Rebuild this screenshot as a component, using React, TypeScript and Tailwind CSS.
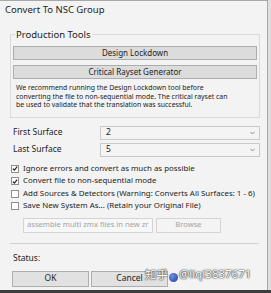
import React from "react";

const FONT = { fontFamily: "'Noto Sans', 'Open Sans', sans-serif" };

function Check({ on }: { on: boolean }) {
  return (
    <span className="w-[8px] h-[8px] border border-[#8f8f8f] bg-white flex items-center justify-center shrink-0">
      {on && (
        <svg width="7" height="7" viewBox="0 0 7 7">
          <path d="M1 3.6 L2.8 5.4 L6 1.2" fill="none" stroke="#222" strokeWidth="1.4" />
        </svg>
      )}
    </span>
  );
}

function Select({ value }: { value: string }) {
  return (
    <div className="w-[160px] h-[14px] border border-[#c9c9c9] bg-[#f4f4f4] flex items-center justify-between pl-[5px] pr-[4px]">
      <span>{value}</span>
      <svg width="5" height="4" viewBox="0 0 5 4">
        <path d="M0.5 0.8 L2.5 3 L4.5 0.8" fill="none" stroke="#888" strokeWidth="0.9" />
      </svg>
    </div>
  );
}

const CHECKS: Array<[string, boolean]> = [
  ["Ignore errors and convert as much as possible", true],
  ["Convert file to non-sequential mode", true],
  ["Add Sources & Detectors (Warning: Converts All Surfaces: 1 - 6)", false],
  ["Save New System As... (Retain your Original File)", false],
];

export default function App() {
  return (
    <div className="relative w-[271px] h-[293px] overflow-hidden bg-[#dedede] text-[#1c1c1c]" style={FONT}>
      <div className="w-[268px] h-[290px] bg-[#f3f3f3] border-t border-r border-[#a8a8a8] flex flex-col">
        <div className="h-[20px] pl-[5px] pt-[3px] text-[9.5px] leading-[12px]">Convert To NSC Group</div>

        <fieldset className="mt-[8px] ml-[10px] mr-[7px] border border-[#dadada] px-[2px] pb-[7px]">
          <legend className="ml-[2px] px-[1px] text-[9.5px] leading-[11px]">Production Tools</legend>
          <div className="mt-[6px] h-[14px] bg-[#dcdcdc] border border-[#adadad] flex items-center justify-center text-[8px]">
            Design Lockdown
          </div>
          <div className="mt-[5px] h-[14px] bg-[#dcdcdc] border border-[#adadad] flex items-center justify-center text-[8px]">
            Critical Rayset Generator
          </div>
          <p className="mt-[5px] pl-[3px] text-[6.9px] leading-[8.5px] whitespace-nowrap">
            We recommend running the Design Lockdown tool before
            <br />
            converting the file to non-sequential mode. The critical rayset can
            <br />
            be used to validate that the translation was successful.
          </p>
        </fieldset>

        <div className="mt-[8px] ml-[13px] flex flex-col gap-[3px] text-[8.5px]">
          <div className="flex items-center">
            <span className="w-[87px]">First Surface</span>
            <Select value="2" />
          </div>
          <div className="flex items-center">
            <span className="w-[87px]">Last Surface</span>
            <Select value="5" />
          </div>
        </div>

        <div className="mt-[6px] ml-[11px] flex flex-col text-[7.9px]">
          {CHECKS.map(([label, on]) => (
            <div key={label} className="h-[12.5px] flex items-center gap-[4px] whitespace-nowrap">
              <Check on={on} />
              <span>{label}</span>
            </div>
          ))}
        </div>

        <div className="mt-[5px] ml-[23px] flex gap-[3px] text-[7.6px] text-[#a3a3a3]">
          <div className="w-[130px] h-[15px] border border-[#d4d4d4] bg-[#f7f7f7] flex items-center pl-[3px] overflow-hidden whitespace-nowrap">
            assemble multi zmx files in new zr
          </div>
          <div className="w-[65px] h-[15px] border border-[#d4d4d4] bg-[#f4f4f4] flex items-center justify-center">Browse</div>
        </div>

        <div className="mt-[10px] ml-[10px] w-[249px] h-px bg-[#d0d0d0]" />

        <div className="mt-[8px] ml-[13px] text-[8.5px] leading-[11px]">Status:</div>

        <div className="mt-[8px] ml-[12px] flex gap-[2px] text-[8.5px]">
          <div className="w-[77px] h-[16px] bg-[#e1e1e1] border border-[#adadad] flex items-center justify-center">OK</div>
          <div className="w-[77px] h-[16px] bg-[#e1e1e1] border border-[#adadad] flex items-center justify-center">Cancel</div>
        </div>
      </div>
      <div className="h-[3px] bg-[#3c3c3c]" />

      <div className="absolute left-[145px] top-[266px] flex items-center text-white text-[11.5px] leading-[14px] [text-shadow:0_0_1px_#444,0_0_1px_#444,0_0_2px_#555]">
        <span style={{ fontFamily: "'Noto Sans CJK SC', sans-serif" }}>知乎</span>
        <span className="w-[9px] h-[9px] rounded-full bg-[radial-gradient(circle_at_35%_35%,#6f8fe0,#1d3c9a)] mx-[1px] mt-[7px]" />
        <span>@liqi3837671</span>
      </div>
    </div>
  );
}
